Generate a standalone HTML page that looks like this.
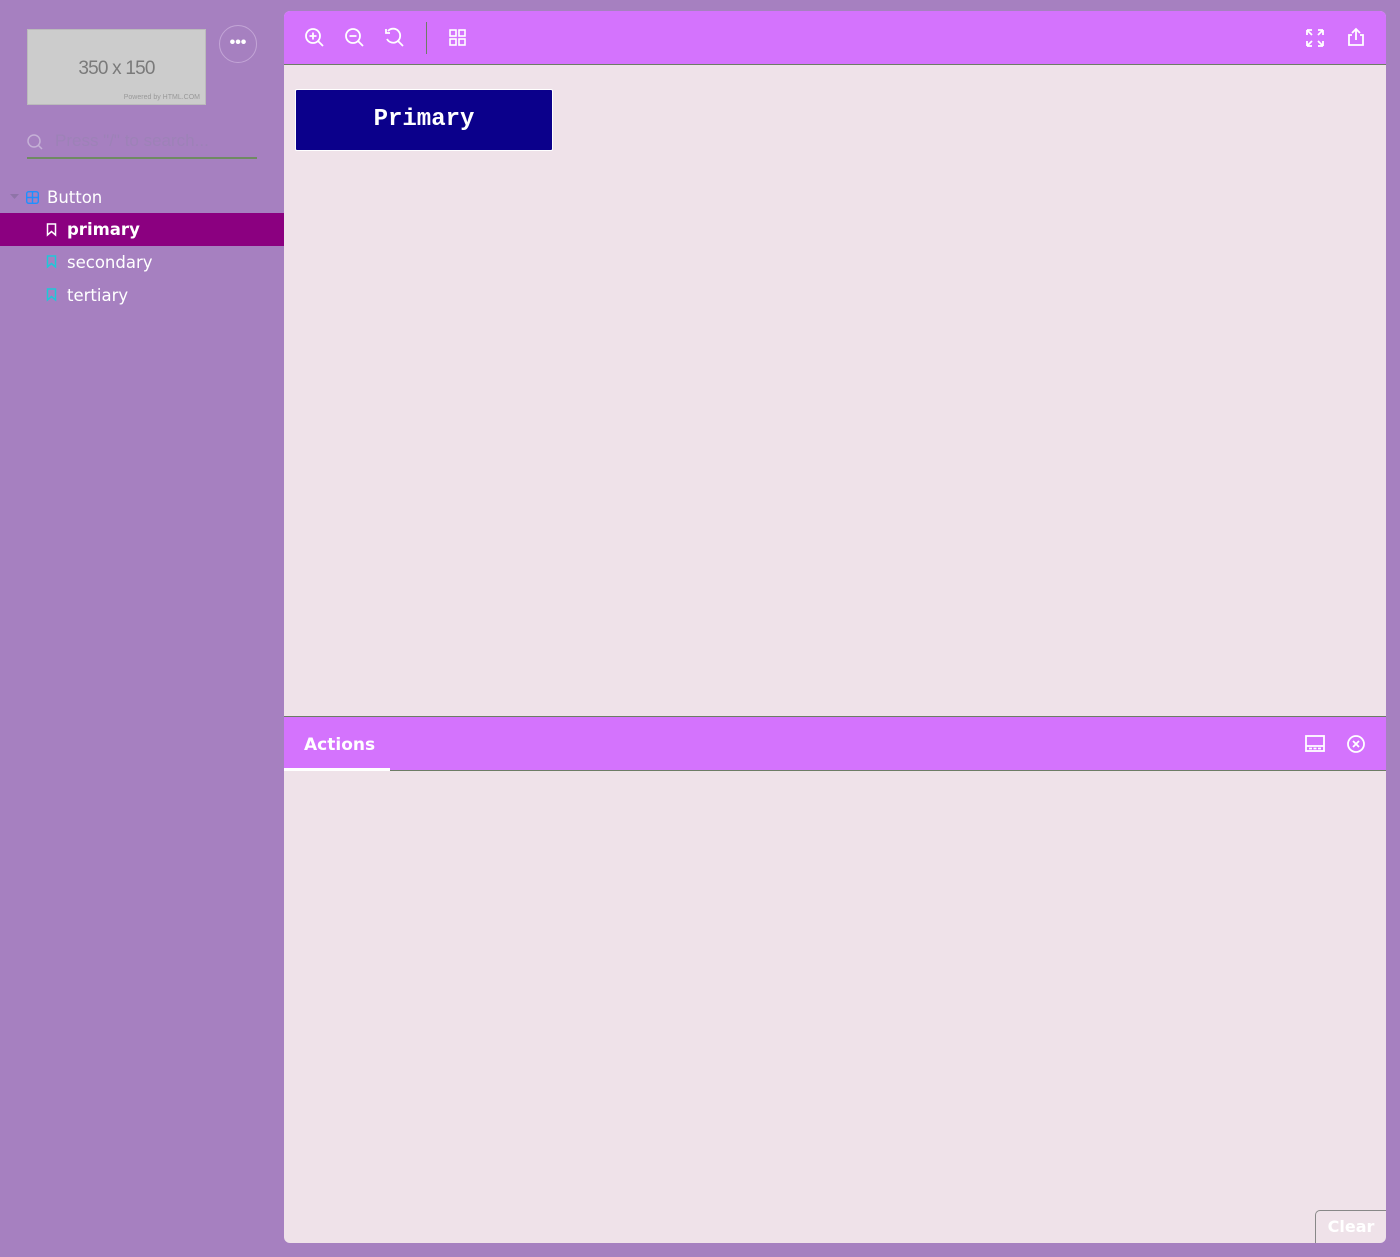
<!DOCTYPE html>
<html><head><meta charset="utf-8"><style>
*{box-sizing:border-box;margin:0;padding:0}
body{width:1400px;height:1257px;background:#a680c0;font-family:"Liberation Sans",sans-serif;position:relative;overflow:hidden}
.abs{position:absolute}
.ph{left:27px;top:29px;width:179px;height:76px;background:#cccccc;border:1px solid #bbb}
.ph .t{position:absolute;left:0;right:0;top:28px;text-align:center;font-size:19px;color:#7a7a7a;letter-spacing:-0.8px}
.ph .p{position:absolute;right:5px;bottom:3px;font-size:7px;color:#999}
.more{left:219px;top:25px;width:38px;height:38px;border:1.5px solid #c3a5d6;border-radius:50%;color:#fff;text-align:center;font-size:16px;line-height:33px;font-weight:bold}
.search{left:27px;top:157px;width:230px;height:2px;background:#6f8a62}
.ph2{left:55px;top:131px;font-size:17px;color:#9d82b7}
.item{font-family:"DejaVu Sans",sans-serif;font-size:16.5px;color:#fff}
.sel{left:0;top:213px;width:284px;height:33px;background:#8b0080}
.main{left:284px;top:11px;width:1102px;height:1232px;background:#efe2e9;border-radius:6px;overflow:hidden}
.bar{position:absolute;left:0;width:100%;height:54px;background:#d473fd;border-bottom:1px solid #6d7d65}
.btn{left:11px;top:78px;width:258px;height:62px;background:#0b008b;border:1px solid #fff;border-radius:2px;color:#fff;font-family:"Liberation Mono",monospace;font-size:24px;font-weight:bold;text-align:center;line-height:60px}
svg{position:absolute}
</style></head><body>
<div class="abs ph"><div class="t">350 x 150</div><div class="p">Powered by HTML.COM</div></div>
<div class="abs more">•••</div>
<svg style="left:26px;top:133px" width="18" height="18" viewBox="0 0 18 18"><circle cx="8" cy="8" r="6" fill="none" stroke="#c5b0d6" stroke-width="1.5"/><path d="M12.5 12.5L16 16" stroke="#c5b0d6" stroke-width="1.5"/></svg>
<div class="abs ph2">Press "/" to search...</div>
<div class="abs search"></div>
<svg style="left:10px;top:193px" width="10" height="8"><path d="M0 1h9L4.5 6z" fill="#8f74a8"/></svg>
<svg style="left:26px;top:191px" width="13" height="13"><rect x="0.7" y="0.7" width="11.6" height="11.6" rx="2" fill="none" stroke="#1e90ff" stroke-width="1.4"/><path d="M6.5 1v11M1 6.5h11" stroke="#1e90ff" stroke-width="1.4"/></svg>
<div class="abs item" style="left:47px;top:188px">Button</div>
<div class="abs sel"></div>
<svg style="left:46px;top:223px" width="12" height="14"><path d="M1.5 1h8v11l-4-3.5-4 3.5z" fill="none" stroke="#fff" stroke-width="1.5"/></svg>
<div class="abs item" style="left:67px;top:220px;font-weight:bold">primary</div>
<svg style="left:46px;top:255px" width="12" height="14"><path d="M1.5 1h8v11l-4-3.5-4 3.5z" fill="none" stroke="#1ec8d8" stroke-width="1.5"/></svg>
<div class="abs item" style="left:67px;top:253px">secondary</div>
<svg style="left:46px;top:288px" width="12" height="14"><path d="M1.5 1h8v11l-4-3.5-4 3.5z" fill="none" stroke="#1ec8d8" stroke-width="1.5"/></svg>
<div class="abs item" style="left:67px;top:286px">tertiary</div>

<div class="abs main">
 <div class="bar" style="top:0">
  <svg style="left:20px;top:16px" width="22" height="22" fill="none" stroke="#fff" stroke-width="1.8"><circle cx="9" cy="9" r="7"/><path d="M14 14l5 5M9 5.5v7M5.5 9h7"/></svg>
  <svg style="left:60px;top:16px" width="22" height="22" fill="none" stroke="#fff" stroke-width="1.8"><circle cx="9" cy="9" r="7"/><path d="M14 14l5 5M5.5 9h7"/></svg>
  <svg style="left:100px;top:16px" width="22" height="22" fill="none" stroke="#fff" stroke-width="1.8"><path d="M4 4A7 7 0 1 1 3 12"/><path d="M2 2v4h4"/><path d="M14 14l5 5"/></svg>
  <div style="position:absolute;left:142px;top:11px;width:1px;height:32px;background:#6d7d65"></div>
  <svg style="left:165px;top:18px" width="18" height="18" fill="none" stroke="#fff" stroke-width="1.6"><rect x="1" y="1" width="6" height="6"/><rect x="10" y="1" width="6" height="6"/><rect x="1" y="10" width="6" height="6"/><rect x="10" y="10" width="6" height="6"/></svg>
  <svg style="left:1021px;top:17px" width="20" height="20" fill="none" stroke="#fff" stroke-width="1.8"><path d="M2 2l5 5M2 2v5M2 2h5M18 2l-5 5M18 2v5M18 2h-5M2 18l5-5M2 18v-5M2 18h5M18 18l-5-5M18 18v-5M18 18h-5"/></svg>
  <svg style="left:1063px;top:16px" width="18" height="20" fill="none" stroke="#fff" stroke-width="1.8"><path d="M5 8H2v10h14V8h-3M9 13V2M5 6l4-4 4 4"/></svg>
 </div>
 <div class="abs btn">Primary</div>
 <div class="bar" style="top:705px;border-top:1px solid #6d7d65;height:55px">
  <div style="position:absolute;left:20px;top:18px;color:#fff;font-weight:bold;font-size:17px;font-family:'DejaVu Sans',sans-serif">Actions</div>
  <div style="position:absolute;left:0;bottom:-1px;width:106px;height:3px;background:#fff"></div>
  <svg style="left:1021px;top:18px" width="20" height="18" fill="none" stroke="#fff" stroke-width="1.8"><rect x="1" y="1" width="18" height="15"/><path d="M1 11h18M4 13.5h3M8.5 13.5h3M13 13.5h3"/></svg>
  <svg style="left:1062px;top:17px" width="20" height="20" fill="none" stroke="#fff" stroke-width="1.8"><circle cx="10" cy="10" r="8"/><path d="M7 7l6 6M13 7l-6 6"/></svg>
 </div>
 <div style="position:absolute;right:0;bottom:0;width:71px;height:33px;border:1.5px solid #888;border-right:none;border-bottom:none;border-top-left-radius:5px;color:#fff;font-weight:bold;font-size:16px;font-family:'DejaVu Sans',sans-serif;text-align:center;line-height:32px">Clear</div>
</div>
</body></html>
